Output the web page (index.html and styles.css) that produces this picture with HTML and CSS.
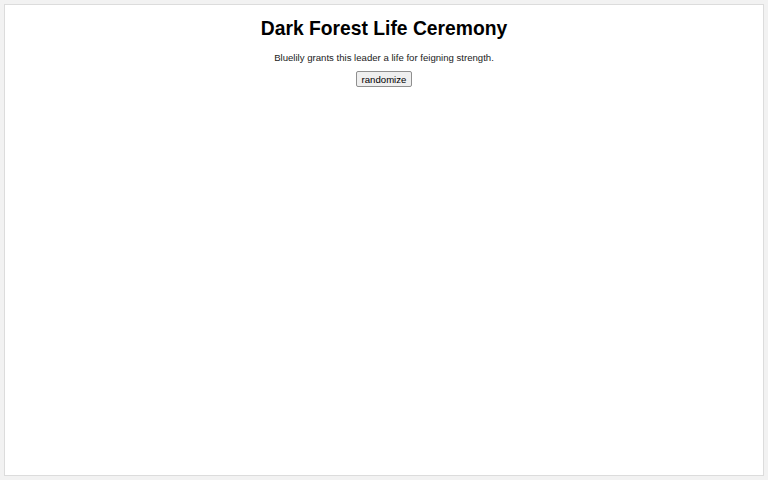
FILE: index.html
```html
<!DOCTYPE html>
<html lang="en">
<head>
<meta charset="utf-8">
<title>Dark Forest Life Ceremony</title>
<link rel="stylesheet" href="styles.css">
</head>
<body>
<main class="card">
  <h1 class="title">Dark Forest Life Ceremony</h1>
  <p class="blessing">Bluelily grants this leader a life for feigning strength.</p>
  <button class="randomize" type="button">randomize</button>
</main>
</body>
</html>
```

FILE: styles.css
```css
html, body {
  height: 100%;
}

body {
  margin: 0;
  padding: 4px;
  box-sizing: border-box;
  background: #f2f2f2;
  font-family: "Liberation Sans", Arial, sans-serif;
  color: #000;
}

.card {
  height: 100%;
  box-sizing: border-box;
  background: #fff;
  border: 1px solid #dcdcdc;
  display: flex;
  flex-direction: column;
  align-items: center;
  padding-top: 14px;
}

.title {
  margin: 0;
  font-size: 19.3px;
  font-weight: bold;
  line-height: 19px;
}

.blessing {
  margin: 14px 0 0;
  font-size: 9.6px;
  line-height: 11px;
  color: #222;
}

.randomize {
  margin-top: 8px;
  font-family: "Liberation Sans", Arial, sans-serif;
  font-size: 9.6px;
  line-height: 11px;
  padding: 2px 5px 1px;
  border: 1px solid #8f8f8f;
  border-radius: 2px;
  background: #efefef;
  color: #000;
}
```
